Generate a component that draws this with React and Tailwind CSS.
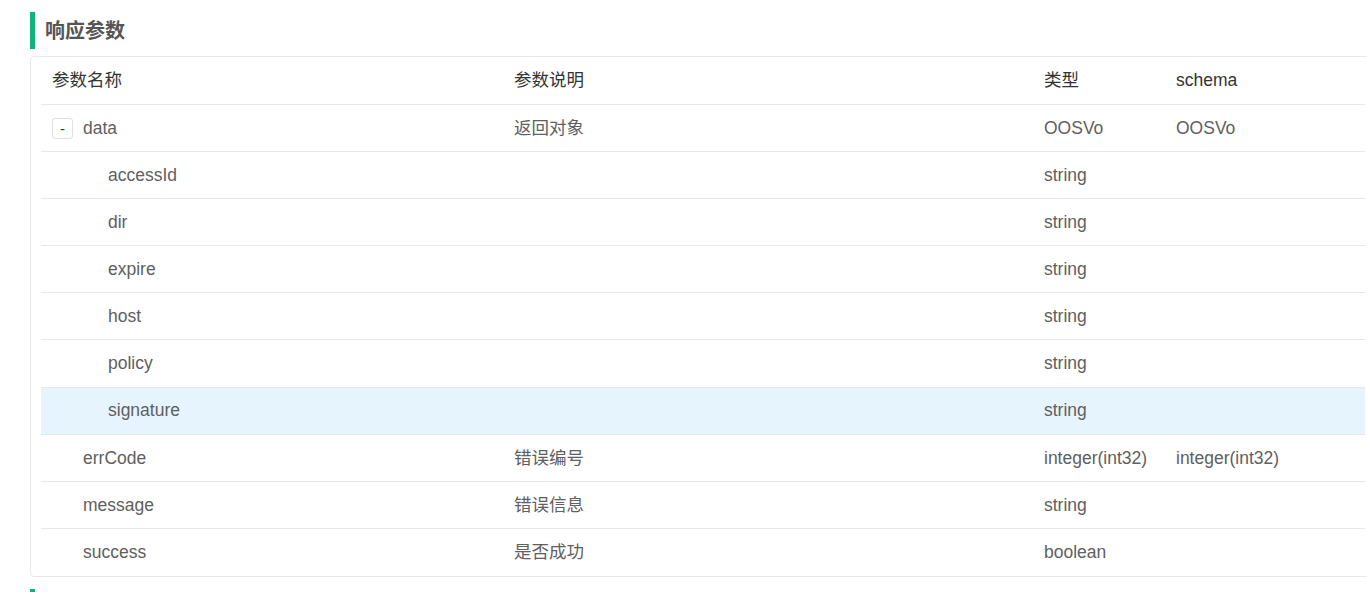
import React from "react";

const rows = [
  { name: "data", desc: "返回对象", type: "OOSVo", schema: "OOSVo", level: 0, expand: true },
  { name: "accessId", type: "string", level: 1 },
  { name: "dir", type: "string", level: 1 },
  { name: "expire", type: "string", level: 1 },
  { name: "host", type: "string", level: 1 },
  { name: "policy", type: "string", level: 1 },
  { name: "signature", type: "string", level: 1, active: true },
  { name: "errCode", desc: "错误编号", type: "integer(int32)", schema: "integer(int32)", level: 0 },
  { name: "message", desc: "错误信息", type: "string", level: 0 },
  { name: "success", desc: "是否成功", type: "boolean", level: 0 },
];

const cols = "grid w-[1324px] grid-cols-[462px_530px_132px_200px]";

const App = () => {
  return (
    <div
      className="w-[1367px] h-[592px] overflow-hidden bg-white pt-3 pl-[30px]"
      style={{ fontFamily: '"Liberation Sans", Arial, "Noto Sans CJK SC", sans-serif' }}
    >
      {/* 标题 */}
      <div className="flex items-center h-[37px] border-l-[5px] border-[#10b47a] pl-[10px]">
        <span className="text-[20px] font-bold text-[#555]">响应参数</span>
      </div>

      {/* 表格卡片 */}
      <div className="mt-[7px] w-[1350px] border border-[#e8e8e8] rounded-[4px] px-[10px]">
        <div className={`${cols} h-[48px] items-center border-b border-[#e8e8e8] text-[17.5px] text-[#333]`}>
          <div className="pl-[11px]">参数名称</div>
          <div className="pl-[11px]">参数说明</div>
          <div className="pl-[11px]">类型</div>
          <div className="pl-[11px]">schema</div>
        </div>
        {rows.map((r, i) => (
          <div
            key={r.name}
            className={`${cols} h-[47.1px] items-center text-[17.5px] text-[#606060] ${
              i < rows.length - 1 ? "border-b border-[#e8e8e8]" : ""
            } ${r.active ? "bg-[#e6f5fd]" : ""}`}
          >
            <div className={`flex items-center ${r.level ? "pl-[67px]" : r.expand ? "pl-[11px]" : "pl-[42px]"}`}>
              {r.expand && (
                <span className="flex items-center justify-center w-[21px] h-[21px] mr-[10px] border border-[#e0e0e0] rounded-[3px] text-[15px] leading-none text-[#333]">
                  -
                </span>
              )}
              {r.name}
            </div>
            <div className="pl-[11px]">{r.desc}</div>
            <div className="pl-[11px]">{r.type}</div>
            <div className="pl-[11px]">{r.schema}</div>
          </div>
        ))}
      </div>

      {/* 下一节的标记 */}
      <div className="mt-[12px] w-[5px] h-[20px] bg-[#10b47a]" />
    </div>
  );
};

export default App;
